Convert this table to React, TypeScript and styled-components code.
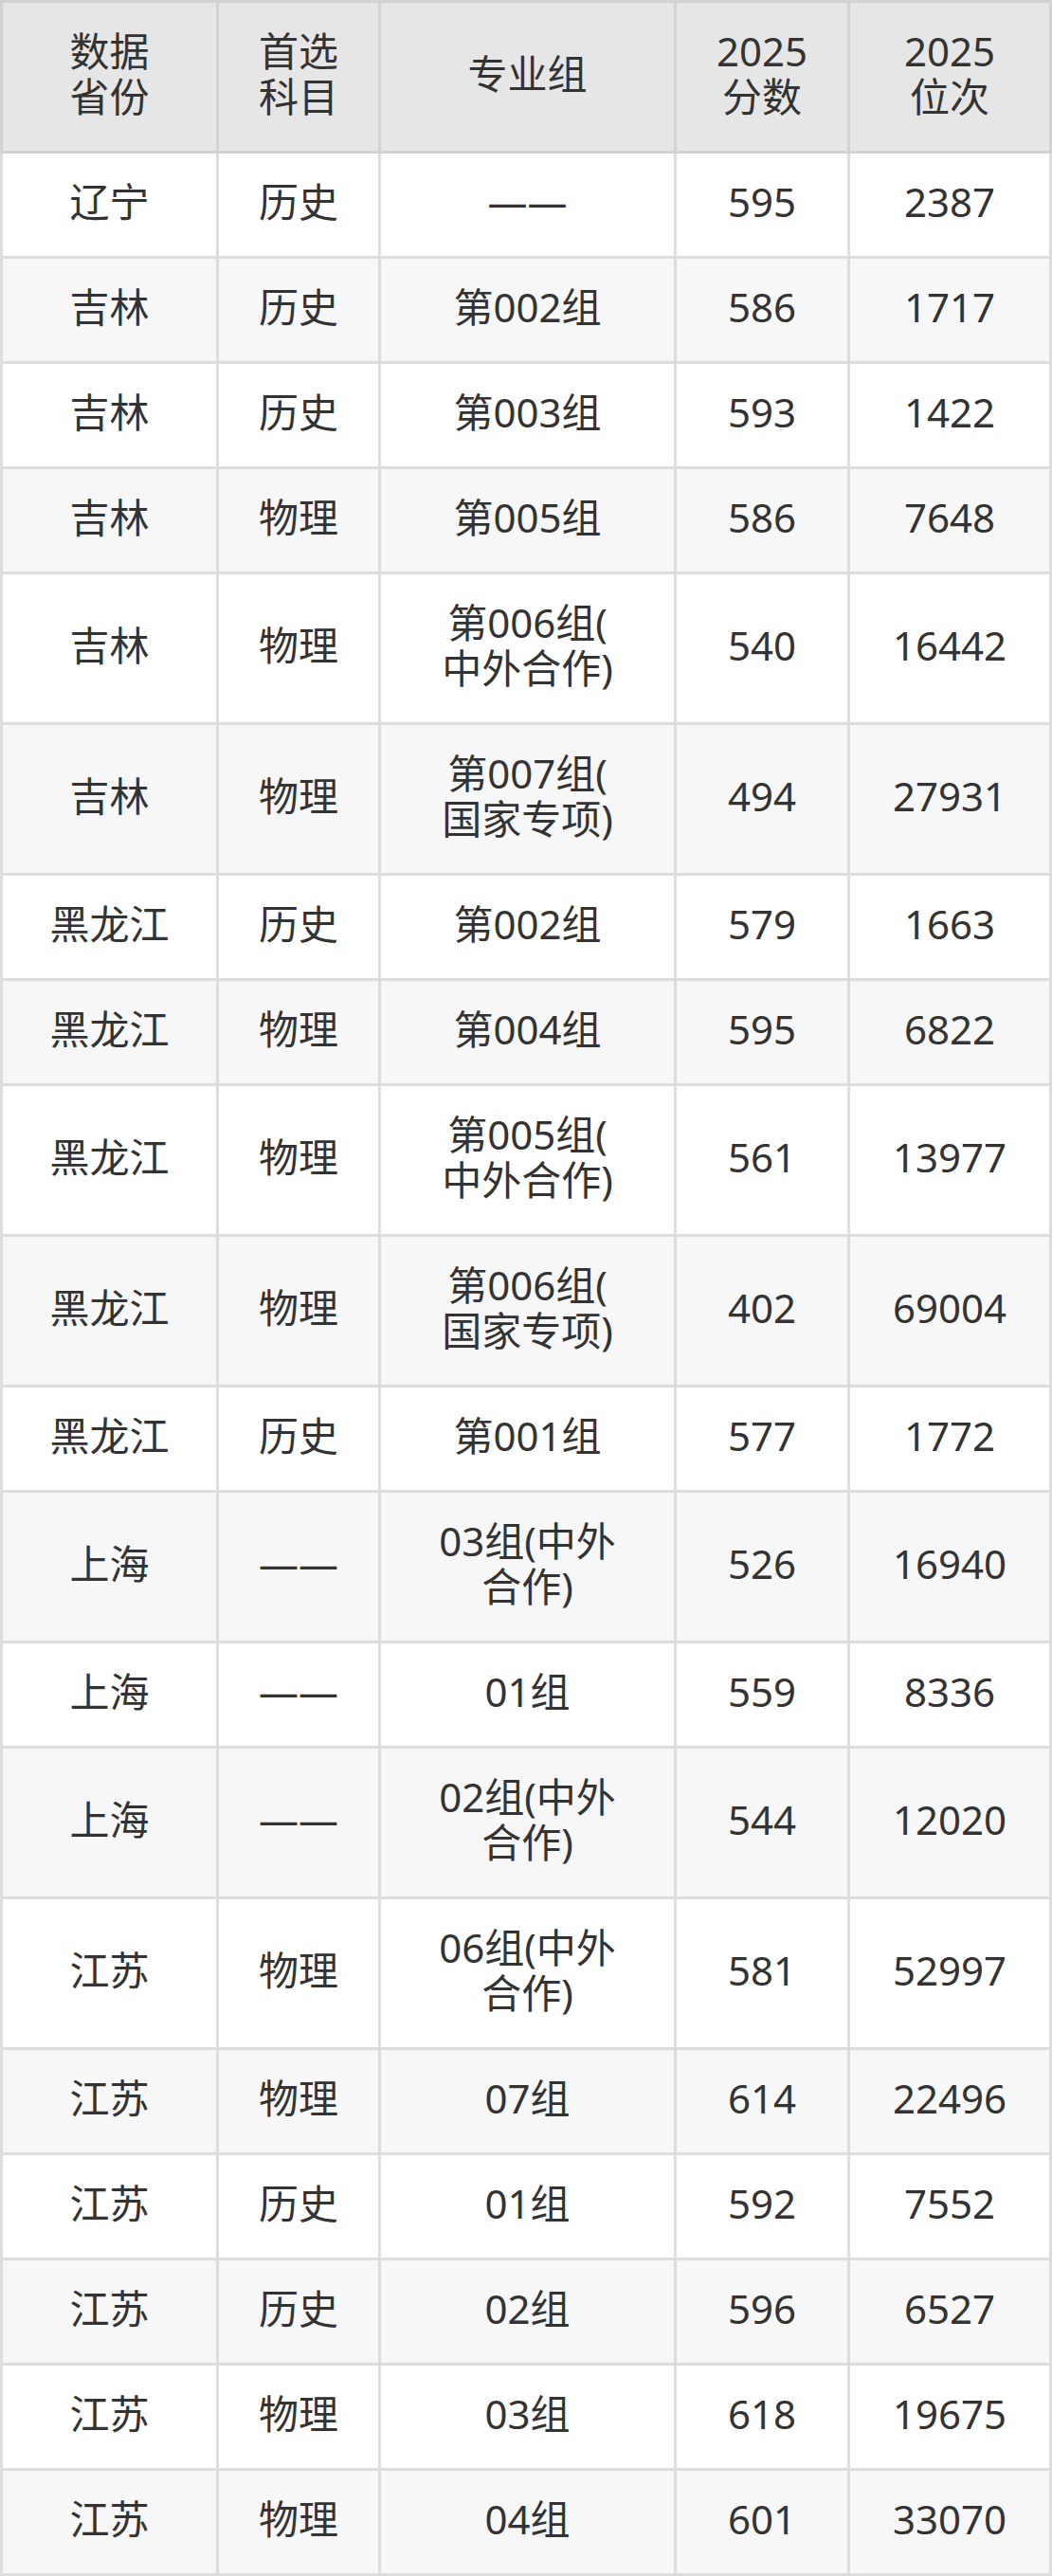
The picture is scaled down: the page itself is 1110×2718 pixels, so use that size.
import React from "react";
import styled, { createGlobalStyle } from "styled-components";

const Global = createGlobalStyle`
  html, body { margin: 0; padding: 0; background: #ffffff; }
  body { font-family: "Noto Sans", "Noto Sans CJK SC", sans-serif; }
`;

const Table = styled.table`
  width: 1110px;
  table-layout: fixed;
  border-collapse: collapse;
  font-family: "Noto Sans", "Noto Sans CJK SC", sans-serif;
  font-size: 42px;
  line-height: 48px;
  color: #333333;
`;

const HeadCell = styled.th`
  background: #e6e6e6;
  border: 3px solid #d2d2d2;
  padding: 27px 0 33px;
  font-weight: 400;
  text-align: center;
  vertical-align: middle;
  white-space: nowrap;
`;

const Row = styled.tr<{ $alt: boolean }>`
  background: ${(p) => (p.$alt ? "#f7f7f7" : "#ffffff")};
`;

const Cell = styled.td`
  border: 3px solid #dddddd;
  padding: 27px 0 33px;
  text-align: center;
  vertical-align: middle;
  white-space: nowrap;
`;

const Line = styled.span`
  display: block;
`;

type R = [string, string, string[], string, string];

const rows: R[] = [
  ["辽宁", "历史", ["——"], "595", "2387"],
  ["吉林", "历史", ["第002组"], "586", "1717"],
  ["吉林", "历史", ["第003组"], "593", "1422"],
  ["吉林", "物理", ["第005组"], "586", "7648"],
  ["吉林", "物理", ["第006组(", "中外合作)"], "540", "16442"],
  ["吉林", "物理", ["第007组(", "国家专项)"], "494", "27931"],
  ["黑龙江", "历史", ["第002组"], "579", "1663"],
  ["黑龙江", "物理", ["第004组"], "595", "6822"],
  ["黑龙江", "物理", ["第005组(", "中外合作)"], "561", "13977"],
  ["黑龙江", "物理", ["第006组(", "国家专项)"], "402", "69004"],
  ["黑龙江", "历史", ["第001组"], "577", "1772"],
  ["上海", "——", ["03组(中外", "合作)"], "526", "16940"],
  ["上海", "——", ["01组"], "559", "8336"],
  ["上海", "——", ["02组(中外", "合作)"], "544", "12020"],
  ["江苏", "物理", ["06组(中外", "合作)"], "581", "52997"],
  ["江苏", "物理", ["07组"], "614", "22496"],
  ["江苏", "历史", ["01组"], "592", "7552"],
  ["江苏", "历史", ["02组"], "596", "6527"],
  ["江苏", "物理", ["03组"], "618", "19675"],
  ["江苏", "物理", ["04组"], "601", "33070"],
];

const headers: string[][] = [
  ["数据", "省份"],
  ["首选", "科目"],
  ["专业组"],
  ["2025", "分数"],
  ["2025", "位次"],
];

const widths = [228, 171, 312, 183, 213];

export default function App() {
  return (
    <>
      <Global />
      <Table>
        <colgroup>
          {widths.map((w, i) => (
            <col key={i} style={{ width: w }} />
          ))}
        </colgroup>
        <thead>
          <tr>
            {headers.map((h, i) => (
              <HeadCell key={i}>
                {h.map((l, j) => (
                  <Line key={j}>{l}</Line>
                ))}
              </HeadCell>
            ))}
          </tr>
        </thead>
        <tbody>
          {rows.map((r, i) => (
            <Row key={i} $alt={i % 2 === 1}>
              <Cell>{r[0]}</Cell>
              <Cell>{r[1]}</Cell>
              <Cell>
                {r[2].map((l, j) => (
                  <Line key={j}>{l}</Line>
                ))}
              </Cell>
              <Cell>{r[3]}</Cell>
              <Cell>{r[4]}</Cell>
            </Row>
          ))}
        </tbody>
      </Table>
    </>
  );
}
